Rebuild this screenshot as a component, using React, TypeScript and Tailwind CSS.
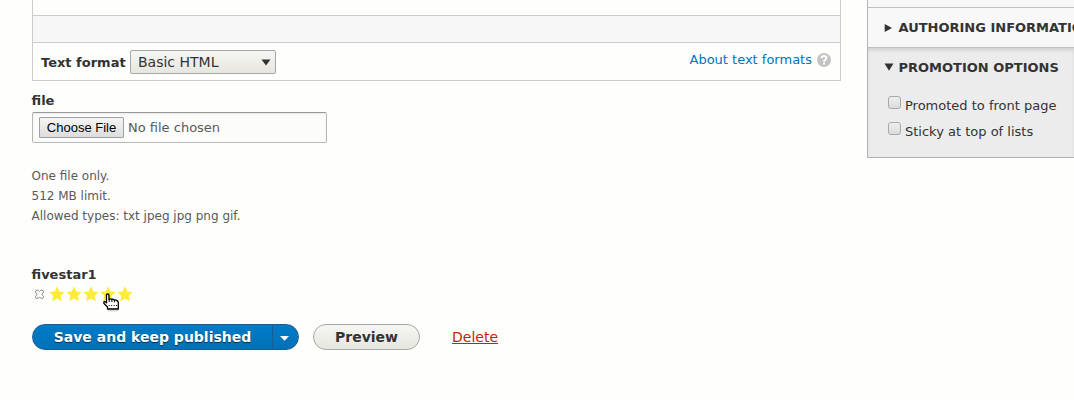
import React from "react";

function Star() {
  return (
    <svg width="17" height="16" viewBox="0 0 17 16" className="block shrink-0">
      <path d="M8 0.5 L10.3 5.4 L15.6 6 L11.7 9.7 L12.8 15.2 L8 12.5 L3.2 15.2 L4.3 9.7 L0.4 6 L5.7 5.4 Z" fill="#fdec35" />
    </svg>
  );
}

function HandCursor() {
  return (
    <svg width="18" height="19" viewBox="0 0 18 19" className="absolute left-[71px] top-[7px]">
      <ellipse cx="10" cy="17.3" rx="6" ry="1.2" fill="#000" opacity="0.15" />
      <path
        d="M3.5 9.8 V2.2 Q3.5 1 4.7 1 Q6 1 6 2.2 V6.3 Q7.3 5.4 8.7 6.5 Q10 5.8 11.4 7.1 Q12.8 6.5 14 7.7 Q15.3 8.3 15.3 10 V16 H4.5 V14 L1 10.5 Q0.4 8.3 1.8 8.4 Z"
        fill="#fff"
        stroke="#000"
        strokeWidth="1.3"
        strokeLinejoin="round"
      />
      <path d="M5.7 12.5h1M8.2 12.5h1M10.7 12.5h1M13 12.5h1M6.2 6v3M8.9 7v2M11.6 7.3v2" stroke="#000" strokeWidth="1" fill="none" />
    </svg>
  );
}

function Option({ label }: { label: string }) {
  return (
    <label className="flex h-[26px] items-start">
      <span className="mt-[5px] h-[13px] w-[13px] shrink-0 rounded-[3px] border border-[#a9a9a9] bg-linear-to-b from-[#eeeeee] to-[#dcdcdc]" />
      <span className="ml-1 mt-[6px] leading-[18px]">{label}</span>
    </label>
  );
}

function Editor() {
  return (
    <div className="h-[81px] border border-t-0 border-[#cccccc]">
      <div className="h-[15px]" />
      <div className="h-[28px] border-y border-[#cccccc] bg-[#f7f7f7]" />
      <div className="flex h-[37px] items-start pl-2 pr-[9px]">
        <span className="mt-[11px] w-[89px] font-bold leading-[18px]">Text format</span>
        <div className="mt-[7px] flex h-[24px] w-[146px] items-center justify-between rounded-[2px] border border-[#a6a6a6] bg-linear-to-b from-[#f6f6f3] to-[#e7e7df] pl-[7px] pr-1 text-[14px] leading-[20px]">
          <span>Basic HTML</span>
          <svg width="10" height="7" viewBox="0 0 10 7" className="mt-px"><path d="M0.5 0.5h9L5 6.5z" fill="#333" /></svg>
        </div>
        <a className="ml-auto mt-[8px] leading-[18px] text-[#0074bd]">About text formats</a>
        <svg width="14" height="14" viewBox="0 0 14 14" className="ml-[5px] mt-[10px]">
          <circle cx="7" cy="7" r="7" fill="#c3c3c3" />
          <path d="M4.6 5.3Q4.7 3.1 7 3.1Q9.4 3.1 9.4 5.1Q9.4 6.1 8.1 6.8Q7 7.4 7 8.7M7 9.6v2" fill="none" stroke="#fff" strokeWidth="2" />
        </svg>
      </div>
    </div>
  );
}

export default function App() {
  return (
    <div className="flex h-[400px] w-[1074px] overflow-hidden bg-[#fefefd] font-['DejaVu_Sans',sans-serif] text-[13px] text-[#333333]">
      <main className="ml-8 w-[809px] shrink-0">
        <Editor />
        <div className="-ml-[0.5px] mt-[11px] h-[20px] font-bold leading-[18px]">file</div>
        <div className="flex h-[31px] w-[295px] items-center rounded-[2px] border border-[#b8b8b8] border-t-[#999999] bg-[#fcfcfa] pl-[6px] shadow-[inset_0_1px_2px_rgba(0,0,0,0.08)]">
          <button className="h-[21px] w-[85px] rounded-[1px] border border-[#a0a0a0] bg-linear-to-b from-[#f5f5f5] to-[#dddddd] font-['Liberation_Sans',sans-serif] text-[13px] leading-[18px] text-black">Choose File</button>
          <span className="ml-1 text-[#595959]">No file chosen</span>
        </div>
        <div className="-ml-[0.5px] mt-[23px] text-[12px] leading-[20px] text-[#595959]">
          <div>One file only.</div>
          <div>512 MB limit.</div>
          <div>Allowed types: txt jpeg jpg png gif.</div>
        </div>
        <div className="-ml-[0.5px] mt-[40px] h-[20px] font-bold leading-[18px]">fivestar1</div>
        <div className="relative flex h-[16px]">
          <svg width="17" height="16" viewBox="0 0 17 16" className="block shrink-0">
            <path d="M5 4 Q6.5 4 7.5 5.5 Q8.5 4 10 4 Q11.7 4.3 11.5 6 L9.8 8.2 L11.5 10.5 Q11.7 12.2 10 12.5 Q8.5 12.5 7.5 11 Q6.5 12.5 5 12.5 Q3.3 12.2 3.5 10.5 L5.2 8.2 L3.5 6 Q3.3 4.3 5 4 Z" fill="#fff" stroke="#898989" strokeWidth="1" strokeLinejoin="round" />
          </svg>
          <Star /><Star /><Star /><Star /><Star />
          <HandCursor />
        </div>
        <div className="mt-[22px] flex h-[26px] items-center text-[14px]">
          <div className="flex h-[26px] w-[267px] overflow-hidden rounded-full border border-[#1e5c90] bg-linear-to-b from-[#007bc6] to-[#0071b8] font-bold text-white">
            <button className="w-[240px] border-r border-[#1e5c90] leading-[24px] [text-shadow:0_1px_1px_rgba(0,0,0,0.6)]">Save and keep published</button>
            <button className="flex flex-1 items-center pl-[7px]" aria-label="More actions">
              <svg width="9" height="5" viewBox="0 0 9 5" className="mt-[3px]"><path d="M0 0h9L4.5 4.7z" fill="#fff" /></svg>
            </button>
          </div>
          <button className="ml-[14px] h-[26px] w-[107px] rounded-full border border-[#a6a6a6] bg-linear-to-b from-[#f6f6f3] to-[#e7e7df] font-bold leading-[24px]">Preview</button>
          <a className="ml-8 text-[#c72100] underline">Delete</a>
        </div>
      </main>
      <aside className="ml-[26px] h-[158px] w-[207px] shrink-0 overflow-hidden border-b border-l border-[#b3b3b3] bg-[#ececec]">
        <div className="h-[8px] border-b border-[#bfbfbf] bg-[#f8f8f8]" />
        <div className="flex h-[39px] items-center whitespace-nowrap bg-[#f8f8f8] pl-[16px] font-bold">
          <svg width="9" height="10" viewBox="0 0 9 10" className="mr-[5.5px] shrink-0"><path d="M0.7 1v8L8 5z" fill="#333" /></svg>
          AUTHORING INFORMATION
        </div>
        <div className="h-[110px] border-t border-[#c0c0c0] bg-[#ececec] shadow-[inset_0_3px_4px_-1px_rgba(0,0,0,0.12)]">
          <div className="flex h-[39px] items-center whitespace-nowrap pl-[16px] font-bold">
            <svg width="10" height="8" viewBox="0 0 10 8" className="-mt-px mr-[4.5px] shrink-0"><path d="M0.5 0.5h9L5 7.8z" fill="#333" /></svg>
            PROMOTION OPTIONS
          </div>
          <div className="pl-5 pt-1">
            <Option label="Promoted to front page" />
            <Option label="Sticky at top of lists" />
          </div>
        </div>
      </aside>
    </div>
  );
}
